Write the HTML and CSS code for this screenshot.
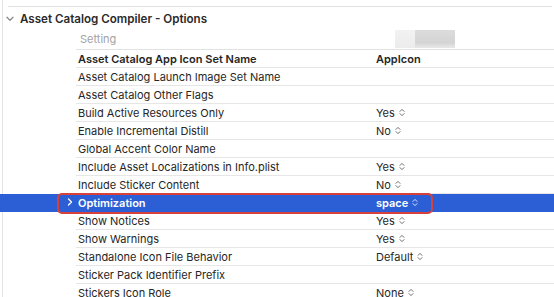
FILE: index.html
```html
<!DOCTYPE html>
<html>
<head>
<meta charset="utf-8">
<link rel="stylesheet" href="styles.css">
</head>
<body>
<div class="page">
  <div class="topline"></div>
  <div class="section-title">
    <svg class="disclosure" width="8" height="6" viewBox="0 0 8 6"><path d="M1 1.2 L4 4.4 L7 1.2" fill="none" stroke="#8a8a8a" stroke-width="1.3" stroke-linecap="round" stroke-linejoin="round"/></svg>
    <span>Asset Catalog Compiler - Options</span>
  </div>
  <div class="header">
    <div class="cells">
      <div class="label head-label">Setting</div>
      <div class="value"><span class="redact"><span class="redact-a"></span><span class="redact-b"></span></span></div>
    </div>
  </div>
  <div class="row"><div class="cells"><div class="label bold">Asset Catalog App Icon Set Name</div><div class="value bold">AppIcon</div></div></div>
  <div class="row"><div class="cells"><div class="label">Asset Catalog Launch Image Set Name</div><div class="value"></div></div></div>
  <div class="row"><div class="cells"><div class="label">Asset Catalog Other Flags</div><div class="value"></div></div></div>
  <div class="row"><div class="cells"><div class="label">Build Active Resources Only</div><div class="value">Yes<svg class="stepper" width="6" height="9" viewBox="0 0 6 9"><path d="M1 3.4 L3 1.4 L5 3.4 M1 5.6 L3 7.6 L5 5.6" fill="none" stroke="currentColor" stroke-width="1" stroke-linecap="round" stroke-linejoin="round"/></svg></div></div></div>
  <div class="row"><div class="cells"><div class="label">Enable Incremental Distill</div><div class="value">No<svg class="stepper" width="6" height="9" viewBox="0 0 6 9"><path d="M1 3.4 L3 1.4 L5 3.4 M1 5.6 L3 7.6 L5 5.6" fill="none" stroke="currentColor" stroke-width="1" stroke-linecap="round" stroke-linejoin="round"/></svg></div></div></div>
  <div class="row"><div class="cells"><div class="label">Global Accent Color Name</div><div class="value"></div></div></div>
  <div class="row"><div class="cells"><div class="label">Include Asset Localizations in Info.plist</div><div class="value">Yes<svg class="stepper" width="6" height="9" viewBox="0 0 6 9"><path d="M1 3.4 L3 1.4 L5 3.4 M1 5.6 L3 7.6 L5 5.6" fill="none" stroke="currentColor" stroke-width="1" stroke-linecap="round" stroke-linejoin="round"/></svg></div></div></div>
  <div class="row"><div class="cells"><div class="label">Include Sticker Content</div><div class="value">No<svg class="stepper" width="6" height="9" viewBox="0 0 6 9"><path d="M1 3.4 L3 1.4 L5 3.4 M1 5.6 L3 7.6 L5 5.6" fill="none" stroke="currentColor" stroke-width="1" stroke-linecap="round" stroke-linejoin="round"/></svg></div></div></div>
  <div class="row selected">
    <div class="cells">
      <svg class="expander" width="6" height="8" viewBox="0 0 6 8"><path d="M1.5 1 L4.5 4 L1.5 7" fill="none" stroke="#ffffff" stroke-width="1.3" stroke-linecap="round" stroke-linejoin="round"/></svg>
      <div class="label bold">Optimization</div>
      <div class="value bold">space<svg class="stepper" width="6" height="9" viewBox="0 0 6 9"><path d="M1 3.4 L3 1.4 L5 3.4 M1 5.6 L3 7.6 L5 5.6" fill="none" stroke="currentColor" stroke-width="1" stroke-linecap="round" stroke-linejoin="round"/></svg></div>
    </div>
    <div class="annotation"></div>
  </div>
  <div class="row"><div class="cells"><div class="label">Show Notices</div><div class="value">Yes<svg class="stepper" width="6" height="9" viewBox="0 0 6 9"><path d="M1 3.4 L3 1.4 L5 3.4 M1 5.6 L3 7.6 L5 5.6" fill="none" stroke="currentColor" stroke-width="1" stroke-linecap="round" stroke-linejoin="round"/></svg></div></div></div>
  <div class="row"><div class="cells"><div class="label">Show Warnings</div><div class="value">Yes<svg class="stepper" width="6" height="9" viewBox="0 0 6 9"><path d="M1 3.4 L3 1.4 L5 3.4 M1 5.6 L3 7.6 L5 5.6" fill="none" stroke="currentColor" stroke-width="1" stroke-linecap="round" stroke-linejoin="round"/></svg></div></div></div>
  <div class="row"><div class="cells"><div class="label">Standalone Icon File Behavior</div><div class="value">Default<svg class="stepper" width="6" height="9" viewBox="0 0 6 9"><path d="M1 3.4 L3 1.4 L5 3.4 M1 5.6 L3 7.6 L5 5.6" fill="none" stroke="currentColor" stroke-width="1" stroke-linecap="round" stroke-linejoin="round"/></svg></div></div></div>
  <div class="row"><div class="cells"><div class="label">Sticker Pack Identifier Prefix</div><div class="value"></div></div></div>
  <div class="row"><div class="cells"><div class="label">Stickers Icon Role</div><div class="value">None<svg class="stepper" width="6" height="9" viewBox="0 0 6 9"><path d="M1 3.4 L3 1.4 L5 3.4 M1 5.6 L3 7.6 L5 5.6" fill="none" stroke="currentColor" stroke-width="1" stroke-linecap="round" stroke-linejoin="round"/></svg></div></div></div>
</div>
</body>
</html>
```
FILE: styles.css
```css
html, body {
  margin: 0;
  padding: 0;
  background: #ffffff;
  overflow: hidden;
}
body {
  width: 554px;
  height: 297px;
  font-family: "Inter", "Liberation Sans", sans-serif;
  font-size: 11px;
  color: #262626;
}
.page {
  position: relative;
  height: 297px;
  overflow: hidden;
}
.page::before {
  content: "";
  position: absolute;
  left: 2px;
  top: 0;
  bottom: 0;
  width: 1px;
  background: #e4e4e4;
}
.topline {
  margin-left: 8px;
  margin-right: 2px;
  height: 6px;
  border-bottom: 1px solid #e2e2e2;
}
.section-title {
  display: flex;
  align-items: center;
  height: 23px;
  padding-left: 6px;
  font-weight: 600;
  font-size: 11.6px;
  color: #2a2a2a;
}
.disclosure {
  margin-right: 6px;
  margin-top: 1px;
}
.header {
  padding-left: 76px;
  height: 20px;
}
.header .cells {
  height: 19px;
  border-bottom: 1px solid #e2e2e2;
}
.head-label {
  color: #a3a3a3;
  padding-left: 4px !important;
  align-self: flex-start;
  margin-top: 2px;
}
.header .value {
  position: relative;
}
.redact {
  display: flex;
  margin-left: 19px;
  margin-top: -2px;
  height: 18px;
}
.redact-a {
  width: 20px;
  background: linear-gradient(#f2f2f2, #ececec);
}
.redact-b {
  width: 40px;
  background: linear-gradient(#dcdcdc, #d4d4d4 70%, #e8e8e8);
}
.row {
  position: relative;
  padding-left: 76px;
  height: 18px;
}
.cells {
  display: flex;
  align-items: center;
  height: 17px;
  border-bottom: 1px solid #e6e6e6;
  position: relative;
}
.label {
  width: 300px;
  padding-left: 2px;
  box-sizing: border-box;
  white-space: nowrap;
}
.value {
  display: flex;
  align-items: center;
  white-space: nowrap;
}
.bold {
  font-weight: 600;
}
.stepper {
  margin-left: 4px;
  color: #6e6e6e;
}
.selected {
  background: #2c5fd6;
  color: #ffffff;
  z-index: 1;
}
.selected .cells {
  border-bottom-color: #2c5fd6;
}
.selected .stepper {
  color: #dfe7fb;
}
.expander {
  position: absolute;
  left: -9px;
  top: 4px;
}
.annotation {
  position: absolute;
  left: 57px;
  top: -1px;
  width: 376px;
  height: 21px;
  box-sizing: border-box;
  border: 2px solid #d8403c;
  border-radius: 5px;
}
```
